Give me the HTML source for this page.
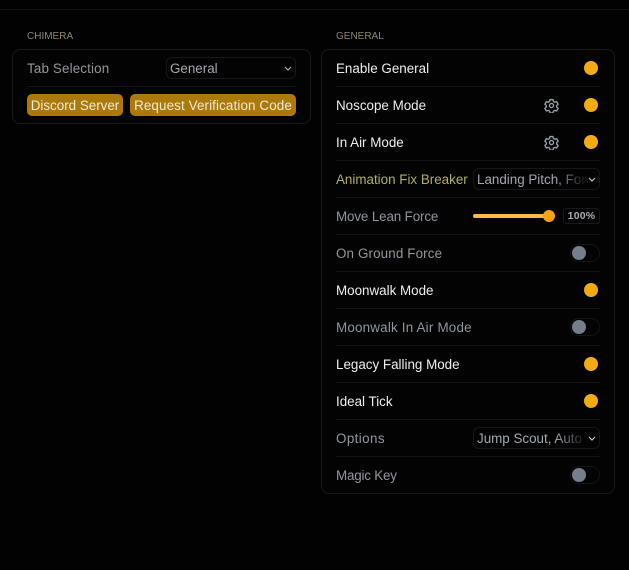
<!DOCTYPE html>
<html><head><meta charset="utf-8"><style>
html,body{margin:0;padding:0;background:#020203;width:629px;height:570px;overflow:hidden}
body{position:relative;font-family:"Liberation Sans",sans-serif;font-size:13.4px;color:#e4e6ea}
div{position:absolute;box-sizing:border-box;white-space:nowrap}
.top{left:0;top:9px;width:629px;height:1px;background:#111216}
.panel{border:1px solid #17191d;border-radius:8px;background:#030304}
.h{font-size:10px;color:#8f846a;line-height:12px}
.l{left:336px;line-height:20px;height:20px}
.w{color:#eceef0}.g{color:#90969e}
.d{left:336px;width:264px;height:1px;background:#111317}
.t{left:584px;width:14px;height:14px;border-radius:50%;background:#f2ab10}
.o{left:570px;width:30px;height:18px;border:1px solid #121418;border-radius:9px}
.o i{position:absolute;left:1px;top:1px;width:14px;height:14px;border-radius:50%;background:#777e8b}
.sel{border:1px solid #15171b;border-radius:6px;height:22px;line-height:22px;color:#a2a8b0}
.sel svg{position:absolute;right:1px;top:6px}
.c{left:3px;top:0;height:20px;overflow:hidden}
.b{top:94px;height:22px;line-height:23px;background:#ac7a0c;border-radius:5px;color:#f1e8d0;text-align:center}
.gear{position:absolute;left:544px;width:15px;height:15px}
.f{right:0;top:0;width:34px;height:20px;background:linear-gradient(90deg,rgba(2,2,3,0),#020203)}
</style></head><body>
<div class="top"></div>
<div class="h" style="left:27px;top:31px">CHIMERA</div>
<div class="h" style="left:336px;top:31px">GENERAL</div>
<div class="panel" style="left:12px;top:49px;width:299px;height:75px"></div>
<div class="panel" style="left:321px;top:49px;width:294px;height:445px"></div>

<div class="l g" style="left:27px;top:59px;letter-spacing:.15px">Tab Selection</div>
<div class="sel" style="left:166px;top:57px;width:130px"><div class="c" style="width:110px">General</div><svg width="12" height="9" viewBox="0 0 12 9"><path d="M3 3L6 6L9 3" fill="none" stroke="#a2a8b0" stroke-width="1.200"/></svg></div>
<div style="left:27px;top:86px;width:269px;height:1px;background:#111317"></div>
<div class="b" style="left:27px;width:96px">Discord Server</div>
<div class="b" style="left:130px;width:166px;letter-spacing:.12px">Request Verification Code</div>

<div class="l w" style="top:59px">Enable General</div><div class="t" style="top:61px"></div>
<div class="d" style="top:86px"></div>
<div class="l w" style="top:96px">Noscope Mode</div>
<svg class="gear" style="top:98px" viewBox="0 0 24 24" fill="none" stroke="#98a0aa" stroke-width="2.100" stroke-linejoin="round"><path d="M9.600 2.500h4.800l.6 3 2.300 1.300 2.900-1 2.400 4.200-2.300 2v2.600l2.300 2-2.400 4.200-2.900-1-2.300 1.300-.6 3H9.600l-.6-3-2.300-1.300-2.900 1-2.400-4.200 2.300-2v-2.600l-2.300-2 2.400-4.200 2.900 1L9 5.500z"/><circle cx="12" cy="12" r="3.300"/></svg>
<div class="t" style="top:98px"></div>
<div class="d" style="top:123px"></div>
<div class="l w" style="top:133px">In Air Mode</div>
<svg class="gear" style="top:135px" viewBox="0 0 24 24" fill="none" stroke="#98a0aa" stroke-width="2.100" stroke-linejoin="round"><path d="M9.600 2.500h4.800l.6 3 2.300 1.300 2.900-1 2.400 4.200-2.300 2v2.600l2.300 2-2.400 4.200-2.900-1-2.300 1.300-.6 3H9.600l-.6-3-2.300-1.300-2.900 1-2.400-4.200 2.300-2v-2.600l-2.300-2 2.400-4.200 2.900 1L9 5.500z"/><circle cx="12" cy="12" r="3.300"/></svg>
<div class="t" style="top:135px"></div>
<div class="d" style="top:160px"></div>
<div class="l" style="top:170px;color:#b0ae68">Animation Fix Breaker</div>
<div class="sel" style="left:473px;top:168px;width:127px"><div class="c" style="width:112px">Landing Pitch, Force<div class="f"></div></div><svg width="12" height="9" viewBox="0 0 12 9"><path d="M3 3L6 6L9 3" fill="none" stroke="#c4c8cc" stroke-width="1.200"/></svg></div>
<div class="d" style="top:197px"></div>
<div class="l g" style="top:207px;letter-spacing:-.13px">Move Lean Force</div>
<div style="left:473px;top:214px;width:76px;height:4px;border-radius:2px;background:#fcb84a"></div>
<div style="left:543px;top:210px;width:12px;height:12px;border-radius:50%;background:#f8a314"></div>
<div style="left:563px;top:208px;width:37px;height:16px;border:1px solid #17191d;border-radius:4px;font-size:10.5px;font-weight:bold;letter-spacing:.2px;line-height:14px;text-align:center;color:#a8acb2">100%</div>
<div class="d" style="top:234px"></div>
<div class="l g" style="top:244px;letter-spacing:.13px">On Ground Force</div><div class="o" style="top:244px"><i></i></div>
<div class="d" style="top:271px"></div>
<div class="l w" style="top:281px">Moonwalk Mode</div><div class="t" style="top:283px"></div>
<div class="d" style="top:308px"></div>
<div class="l g" style="top:318px;letter-spacing:.2px">Moonwalk In Air Mode</div><div class="o" style="top:318px"><i></i></div>
<div class="d" style="top:345px"></div>
<div class="l w" style="top:355px">Legacy Falling Mode</div><div class="t" style="top:357px"></div>
<div class="d" style="top:382px"></div>
<div class="l w" style="top:392px">Ideal Tick</div><div class="t" style="top:394px"></div>
<div class="d" style="top:419px"></div>
<div class="l g" style="top:429px;letter-spacing:.4px">Options</div>
<div class="sel" style="left:473px;top:427px;width:127px"><div class="c" style="width:112px">Jump Scout, Auto Strafe<div class="f"></div></div><svg width="12" height="9" viewBox="0 0 12 9"><path d="M3 3L6 6L9 3" fill="none" stroke="#c4c8cc" stroke-width="1.200"/></svg></div>
<div class="d" style="top:456px"></div>
<div class="l g" style="top:466px;letter-spacing:-.2px">Magic Key</div><div class="o" style="top:466px"><i></i></div>
</body></html>
